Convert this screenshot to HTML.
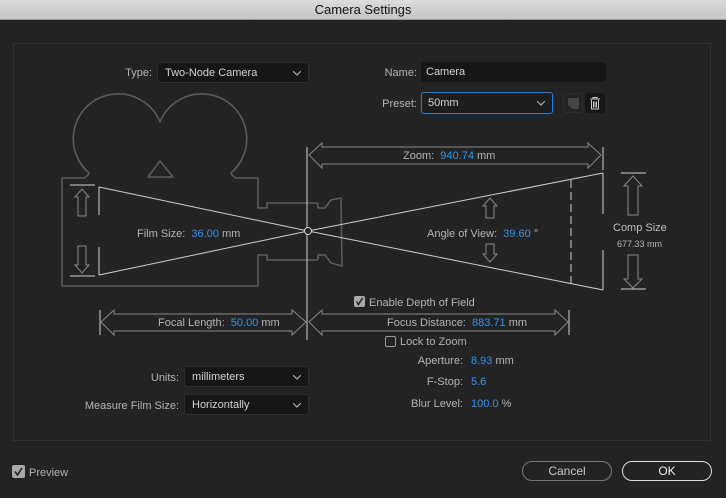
<!DOCTYPE html>
<html><head><style>
*{margin:0;padding:0;box-sizing:border-box}
body{width:726px;height:498px;background:#232323;font-family:"Liberation Sans",sans-serif;font-size:11px;color:#b4b4b4;position:relative;overflow:hidden}
.t{position:absolute;white-space:nowrap;line-height:14px}
.b{color:#3393ec}
.r{text-align:right}
.dd{position:absolute;background:#161616;border:1px solid #2e2e2e;border-radius:3px;color:#d4d4d4;padding-left:7px;line-height:20px}
.dd svg{position:absolute;right:7px;top:8px}
.btn{position:absolute;border:1.5px solid #8a8a8a;border-radius:10px;text-align:center;line-height:18px;color:#c8c8c8;font-size:12px}
.cb{position:absolute;width:11px;height:11px;border-radius:2px}
</style></head><body>
<div style="position:absolute;left:0;top:0;width:726px;height:20px;background:linear-gradient(#dcdcdc,#c4c4c4);border-bottom:1px solid #999;text-align:center;color:#111;font-size:13px;line-height:19px">Camera Settings</div>
<div style="position:absolute;left:13px;top:43px;width:698px;height:398px;border:1px solid #333"></div>

<svg width="726" height="498" style="position:absolute;left:0;top:0" fill="none">
<g stroke="#5c5c5c" stroke-width="1.6" stroke-linejoin="round">
<path d="M84 178 Q88 176 89 173 A45 45 0 1 1 160 122 A45 45 0 1 1 231 173 Q232 176 236 178 L258 178 L258 208 L267 208 L267 203 L316 203 Q318 203 318 206 L318 208 L325 208 L331 200 L341 198 L342 266 L331 263 L325 255 L318 255 L318 258 Q318 260 316 260 L267 260 L267 255 L258 255 L258 286 L62 286 L62 178 Z"/>
<path d="M160 161 L148 177 L173 177 Z"/>
</g>
<g stroke="#d0d0d0" stroke-width="1">
<line x1="307" y1="147" x2="307" y2="340"/>
<path d="M99 187 L308 231 L99 275 M99 187 V215 M99 247 V275 M308 231 L603 173 M308 231 L603 290 M603 173 V214 M603 250 V290 M603 147 V170"/>
<path d="M571 180 V284" stroke-dasharray="8,4"/>
<circle cx="308" cy="231" r="3.5" fill="#232323"/>
<path d="M70 185 H95 M70 276 H95 M621 173 H646 M621 289 H646 M100 310 V335 M569 310 V335"/>
</g>
<g stroke="#888" stroke-width="1">
<path d="M78 216 V197 H75 L82 189 L89 197 H86 V216 Z"/>
<path d="M78 246 V265 H75 L82 273 L89 265 H86 V246 Z"/>
<path d="M628 215 V186 H624 L633 176 L642 186 H638 V215 Z"/>
<path d="M628 255 V279 H624 L633 288 L642 279 H638 V255 Z"/>
<path d="M486 218 V206 H483 L490 198 L497 206 H494 V218 Z"/>
<path d="M486 244 V254 H483 L490 262 L497 254 H494 V244 Z"/>
<path d="M309 155 L322 143 V147 H588 V143 L601 155 L588 168 V164 H322 V168 Z"/>
<path d="M101 322 L114 310 V314 H292 V310 L306 322 L292 335 V331 H114 V335 Z"/>
<path d="M309 322 L322 310 V314 H555 V310 L568 322 L555 335 V331 H322 V335 Z"/>
</g>
</svg>

<div class="t r" style="left:100px;top:66px;width:52px">Type:</div>
<div class="dd" style="left:157px;top:62px;width:152px;height:21px">Two-Node Camera<svg width="8" height="5"><path d="M0 0 L4 4 L8 0" stroke="#bbb" fill="none"/></svg></div>
<div class="t r" style="left:360px;top:66px;width:57px">Name:</div>
<div style="position:absolute;left:421px;top:62px;width:185px;height:20px;background:#161616;border-radius:3px;color:#d4d4d4;padding-left:5px;line-height:21px">Camera</div>
<div class="t r" style="left:360px;top:97px;width:57px">Preset:</div>
<div class="dd" style="left:421px;top:92px;width:132px;height:22px;border-color:#2d7fd6;background:#1d1d1d;line-height:21px;padding-left:6px">50mm<svg width="8" height="5"><path d="M0 0 L4 4 L8 0" stroke="#bbb" fill="none"/></svg></div>
<div style="position:absolute;left:563px;top:93px;width:20px;height:20px;border:1px solid #2e2e2e;border-radius:3px"><div style="position:absolute;left:4px;top:4px;width:11px;height:11px;background:#444;clip-path:polygon(0 0,100% 0,100% 100%,40% 100%,0 60%)"></div></div>
<div style="position:absolute;left:585px;top:93px;width:20px;height:20px;background:#161616;border-radius:3px"><svg width="20" height="20" style="position:absolute;left:0;top:0"><path d="M5 6 H15 M8 6 V4.5 H12 V6 M6.5 7 V16 H13.5 V7 M8.5 8.5 V14.5 M10 8.5 V14.5 M11.5 8.5 V14.5" stroke="#ccc" fill="none"/></svg></div>

<div class="t" style="left:403px;top:149px">Zoom:&nbsp; <span class="b">940.74</span> mm</div>
<div class="t" style="left:137px;top:227px">Film Size:&nbsp; <span class="b">36.00</span> mm</div>
<div class="t" style="left:427px;top:227px">Angle of View:&nbsp; <span class="b">39.60</span> °</div>
<div class="t" style="left:613px;top:221px;color:#c0c0c0">Comp Size</div>
<div class="t" style="left:617px;top:237px;font-size:9px">677.33 mm</div>

<div class="cb" style="left:354px;top:296px;background:#a8a8a8"><svg width="11" height="11" style="position:absolute"><path d="M2.5 5.5 L4.5 8.5 L8.5 2" stroke="#222" stroke-width="1.5" fill="none"/></svg></div>
<div class="t" style="left:369px;top:296px">Enable Depth of Field</div>
<div class="t" style="left:158px;top:316px">Focal Length:&nbsp; <span class="b">50.00</span> mm</div>
<div class="t" style="left:387px;top:316px">Focus Distance:&nbsp; <span class="b">883.71</span> mm</div>
<div class="cb" style="left:385px;top:336px;border:1.5px solid #999"></div>
<div class="t" style="left:400px;top:335px">Lock to Zoom</div>
<div class="t r" style="left:380px;top:354px;width:83px">Aperture:</div><div class="t" style="left:471px;top:354px"><span class="b">8.93</span> mm</div>
<div class="t r" style="left:380px;top:375px;width:83px">F-Stop:</div><div class="t b" style="left:471px;top:375px">5.6</div>
<div class="t r" style="left:380px;top:397px;width:83px">Blur Level:</div><div class="t" style="left:471px;top:397px"><span class="b">100.0</span> %</div>

<div class="t r" style="left:80px;top:371px;width:99px">Units:</div>
<div class="dd" style="left:184px;top:366px;width:125px;height:21px">millimeters<svg width="8" height="5"><path d="M0 0 L4 4 L8 0" stroke="#bbb" fill="none"/></svg></div>
<div class="t r" style="left:60px;top:399px;width:119px">Measure Film Size:</div>
<div class="dd" style="left:184px;top:394px;width:125px;height:21px">Horizontally<svg width="8" height="5"><path d="M0 0 L4 4 L8 0" stroke="#bbb" fill="none"/></svg></div>

<div class="cb" style="left:12px;top:465px;width:13px;height:13px;background:#a8a8a8"><svg width="13" height="13" style="position:absolute"><path d="M3 6.5 L5.5 10 L10 3" stroke="#222" stroke-width="1.6" fill="none"/></svg></div>
<div class="t" style="left:29px;top:466px">Preview</div>
<div class="btn" style="left:522px;top:461px;width:90px;height:20px;border-color:#777">Cancel</div>
<div class="btn" style="left:622px;top:461px;width:90px;height:20px;border-color:#ddd;color:#eee">OK</div>
</body></html>
